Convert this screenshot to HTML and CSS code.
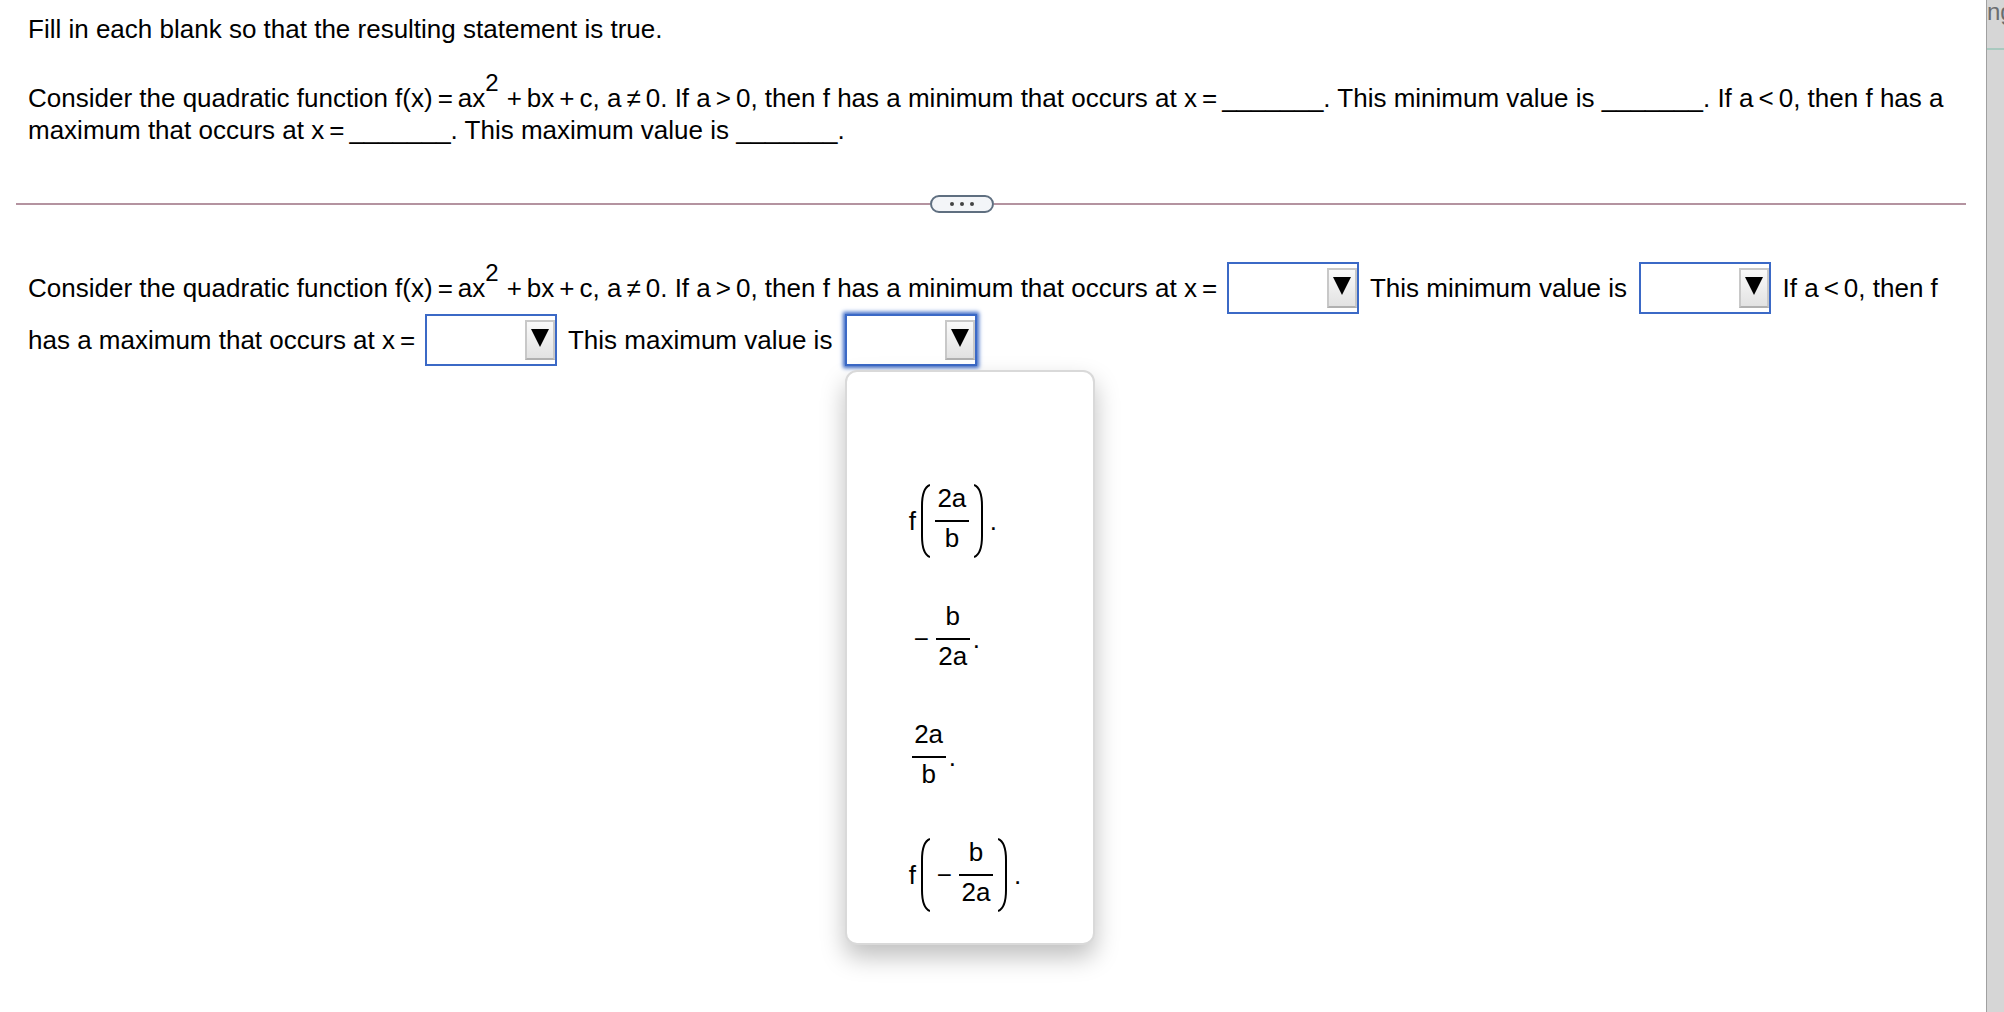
FILE: index.html
```
<!DOCTYPE html>
<html lang="en">
    <head>
        <meta charset="utf-8">
        <title>Question</title>
        <link rel="stylesheet" href="styles.css">
    </head>
    <body>
        <main class="panel">
            <section class="question">
                <p>Fill in each blank so that the resulting statement is true.</p>
                <p>Consider the quadratic function f(x)<span class="op">=</span>ax<sup>2</sup><span class="op">+</span>bx<span class="op">+</span>c, a<span class="op">≠</span>0. If a<span class="op">&gt;</span>0, then f has a minimum that occurs at x<span class="op">=</span>_______. This minimum value is _______. If a<span class="op">&lt;</span>0, then f has a maximum that occurs at x<span class="op">=</span>_______. This maximum value is _______.</p>
            </section>

            <div class="divider">
                <button class="handle" type="button" aria-label="Resize question">
                    <svg width="24" height="4" viewBox="0 0 24 4"><circle cx="2" cy="2" r="2"/><circle cx="12" cy="2" r="2"/><circle cx="22" cy="2" r="2"/></svg>
                </button>
            </div>

            <section class="answer">
                Consider the quadratic function f(x)<span class="op">=</span>ax<sup>2</sup><span class="op">+</span>bx<span class="op">+</span>c, a<span class="op">≠</span>0. If a<span class="op">&gt;</span>0, then f has a minimum that occurs at <label for="min-x">x<span class="op">=</span></label><span class="pick">
                    <select id="min-x"><option></option></select>
                    <span class="caret"><svg width="18" height="18" viewBox="0 0 18 18"><path d="M0 0h18L9 18z"/></svg></span>
                </span> <label for="min-value">This minimum value is</label> <span class="pick">
                    <select id="min-value"><option></option></select>
                    <span class="caret"><svg width="18" height="18" viewBox="0 0 18 18"><path d="M0 0h18L9 18z"/></svg></span>
                </span> If a<span class="op">&lt;</span>0, then f has a maximum that occurs at <label for="max-x">x<span class="op">=</span></label><span class="pick">
                    <select id="max-x"><option></option></select>
                    <span class="caret"><svg width="18" height="18" viewBox="0 0 18 18"><path d="M0 0h18L9 18z"/></svg></span>
                </span> <label for="max-value">This maximum value is</label> <span class="pick pick_open">
                    <select id="max-value"><option></option></select>
                    <span class="caret"><svg width="18" height="18" viewBox="0 0 18 18"><path d="M0 0h18L9 18z"/></svg></span>
                    <span class="menu" role="listbox" aria-label="Maximum value">
                        <span class="choice choice_empty" role="option" aria-selected="true"></span>
                        <span class="choice" role="option">f
                            <svg class="paren" viewBox="0 0 9 74"><path d="M9 1Q1 4 1 22V52Q1 70 9 73"/></svg>
                            <span class="frac"><span class="num">2a</span><span class="den">b</span></span>
                            <svg class="paren paren_close" viewBox="0 0 9 74"><path d="M0 1Q8 4 8 22V52Q8 70 0 73"/></svg>
                            <span class="stop">.</span>
                        </span>
                        <span class="choice" role="option">
                            <span class="minus">−</span>
                            <span class="frac"><span class="num">b</span><span class="den">2a</span></span>.
                        </span>
                        <span class="choice" role="option">
                            <span class="frac"><span class="num">2a</span><span class="den">b</span></span>.
                        </span>
                        <span class="choice" role="option">f
                            <svg class="paren" viewBox="0 0 9 74"><path d="M9 1Q1 4 1 22V52Q1 70 9 73"/></svg>
                            <span class="minus">−</span>
                            <span class="frac"><span class="num">b</span><span class="den">2a</span></span>
                            <svg class="paren paren_close" viewBox="0 0 9 74"><path d="M0 1Q8 4 8 22V52Q8 70 0 73"/></svg>
                            <span class="stop">.</span>
                        </span>
                    </span>
                </span>
            </section>
        </main>
        <aside class="behind">
            <div class="behind-bar">ng</div>
        </aside>
    </body>
</html>
```
FILE: styles.css
```
* {
    box-sizing: border-box;
}
body {
    display: flex;
    min-height: 100vh;
    margin: 0;
    overflow: hidden;
    background: #fff;
    color: #000;
    font-family: "Liberation Sans", Arial, sans-serif;
    font-size: 26px;
    line-height: 32px;
}
.panel {
    flex: 1;
    min-width: 0;
    padding: 13px 20px 0 16px;
}
.question, .answer {
    padding: 0 12px;
}
.question p {
    margin: 0 0 37px;
}
.question p:last-child {
    margin-bottom: 0;
}
.op {
    margin: 0 5px;
}
sup {
    margin-right: 3px;
    font-size: 24px;
    line-height: 0;
    vertical-align: 16px;
}

/* divider between the question and the answer */
.divider {
    display: flex;
    align-items: center;
    margin: 49px 0;
}
.divider::before, .divider::after {
    content: "";
    flex: 16;
    height: 2px;
    background: #b493a0;
}
.divider::after {
    flex: 17;
}
.handle {
    display: flex;
    align-items: center;
    justify-content: center;
    width: 64px;
    height: 18px;
    padding: 0;
    border: 2px solid #5f6f80;
    border-radius: 9px;
    background: #f3f5f8;
    fill: #444;
}

/* drop-downs */
.answer {
    line-height: 52px;
}
.pick {
    position: relative;
    display: inline-grid;
    width: 132px;
    height: 52px;
    margin: 0 4px 0 5px;
    border: 2px solid #3b69c6;
    vertical-align: bottom;
    line-height: 32px;
}
.pick select, .caret {
    grid-area: 1 / 1;
}
.pick select {
    width: 100%;
    height: 100%;
    border: 0;
    outline: 0;
    appearance: none;
    background: #fff;
    font: inherit;
}
.caret {
    display: flex;
    justify-content: center;
    justify-self: end;
    align-self: center;
    width: 30px;
    height: 40px;
    padding-top: 7px;
    border: 2px solid #c8c8c8;
    border-bottom-color: #b0b0b0;
    background: linear-gradient(#fafafa, #e2e2e2);
    pointer-events: none;
}
.pick_open {
    box-shadow: 0 0 4px 2px #3b69c6;
}
.menu {
    position: absolute;
    top: 54px;
    left: -2px;
    width: 250px;
    padding: 9px 0;
    border: 2px solid #d9d9d9;
    border-radius: 12px;
    background: #fff;
    box-shadow: 0 12px 24px rgba(0, 0, 0, 0.25);
}
.choice {
    display: flex;
    align-items: center;
    height: 118px;
    padding-left: 62px;
}
.choice_empty {
    height: 81px;
}
.paren {
    width: 9px;
    height: 74px;
    margin: 0 2px 0 5px;
    fill: none;
    stroke: #000;
    stroke-width: 2;
}
.paren_close {
    margin: 0 5px 0 2px;
}
.frac {
    display: flex;
    flex-direction: column;
    width: 34px;
    margin: 0 3px;
    text-align: center;
}
.num {
    padding-bottom: 6px;
}
.den {
    padding-bottom: 6px;
    border-top: 2px solid #000;
}
.minus {
    margin: 0 4px 0 5px;
}
.stop {
    margin-left: 2px;
}

/* page that shows behind the panel */
.behind {
    width: 18px;
    overflow: hidden;
    border-left: 1px solid #a0a0a0;
    background: #d6d6d6;
}
.behind-bar {
    height: 50px;
    border-bottom: 2px solid #a9c9bf;
    color: #6a6d70;
    font-size: 24px;
    line-height: 24px;
}
```
